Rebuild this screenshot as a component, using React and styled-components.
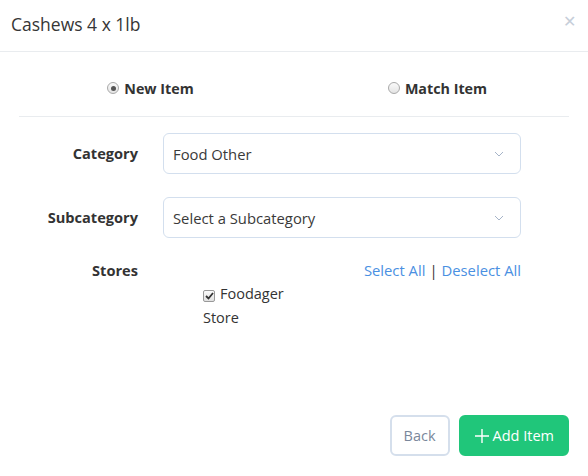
import React from "react";
import styled, { createGlobalStyle } from "styled-components";

const Global = createGlobalStyle`
  html, body { margin: 0; padding: 0; background: #fff; }
  body { font-family: "Open Sans", Lato, sans-serif; color: #333; }
  * { box-sizing: border-box; }
`;

const Modal = styled.div`
  width: 588px;
  height: 476px;
  display: flex;
  flex-direction: column;
  background: #fff;
`;

const Header = styled.div`
  height: 52px;
  border-bottom: 1px solid #e9ecef;
  display: flex;
  align-items: center;
  justify-content: space-between;
  padding: 0 12px 4px 11px;
`;

const Title = styled.h4`
  margin: 0;
  font-size: 17.5px;
  font-weight: 400;
  color: #363636;
`;

const Close = styled.span`
  font-size: 16px;
  color: #c6ced9;
  line-height: 1;
  margin-top: -6px;
`;

const Body = styled.div`
  flex: 1;
  padding: 0 19px;
  display: flex;
  flex-direction: column;
`;

const RadioRow = styled.div`
  display: grid;
  grid-template-columns: 1fr 1fr;
  height: 65px;
  border-bottom: 1px solid #e9ecef;
  align-items: center;
  padding-top: 8px;
`;

const RadioOption = styled.label`
  display: flex;
  align-items: center;
  justify-content: center;
  gap: 5px;
  font-size: 14.3px;
  font-weight: 700;
  color: #333;
  margin-left: ${p => p.$shift || 0}px;
`;

const RadioDot = styled.span`
  width: 12px;
  height: 12px;
  border-radius: 50%;
  border: 1px solid #a9a9a9;
  background: linear-gradient(#fafafa, #e4e4e4);
  display: flex;
  align-items: center;
  justify-content: center;
  &::after {
    content: "";
    width: 5px;
    height: 5px;
    border-radius: 50%;
    background: ${p => (p.$checked ? "#555" : "transparent")};
  }
`;

const Form = styled.div`
  display: flex;
  flex-direction: column;
  padding-top: 16px;
  width: 502px;
`;

const FieldRow = styled.div`
  display: grid;
  grid-template-columns: 119px 1fr;
  column-gap: 25px;
  align-items: ${p => p.$top ? "start" : "center"};
  margin-bottom: ${p => p.$mb || 0}px;
`;

const Label = styled.div`
  text-align: right;
  font-size: 14.6px;
  font-weight: 700;
  color: #333;
  margin-top: ${p => p.$mt || 0}px;
`;

const Select = styled.div`
  height: 41px;
  border: 1px solid #d3dfee;
  border-radius: 6px;
  display: flex;
  align-items: center;
  justify-content: space-between;
  padding: 0 16px 0 9px;
  font-size: 14.8px;
  color: #3a3a3a;
`;

const Chevron = () => (
  <svg width="10" height="6" viewBox="0 0 10 6">
    <path d="M1 1 L5 5 L9 1" fill="none" stroke="#a6b4c8" strokeWidth="1" />
  </svg>
);

const StoresField = styled.div`
  display: flex;
  flex-direction: column;
`;

const LinkRow = styled.div`
  display: flex;
  justify-content: flex-end;
  font-size: 14.8px;
  color: #333;
  gap: 4px;
`;

const Link = styled.a`
  color: #4a90e2;
  text-decoration: none;
`;

const StoreItem = styled.label`
  margin-left: 40px;
  margin-top: 2px;
  width: 90px;
  font-size: 14.5px;
  line-height: 24px;
  color: #333;
`;

const Check = styled.span`
  display: inline-flex;
  width: 12px;
  height: 12px;
  border: 1px solid #999;
  border-radius: 2px;
  background: linear-gradient(#fcfcfc, #e0e0e0);
  margin-right: 5px;
  vertical-align: -1px;
  align-items: center;
  justify-content: center;
`;

const Footer = styled.div`
  display: flex;
  justify-content: flex-end;
  gap: 9px;
  padding: 0 19px 20px 0;
`;

const Button = styled.button`
  height: 41px;
  border-radius: 6px;
  font-family: inherit;
  font-size: 14.5px;
  display: flex;
  align-items: center;
  gap: 3px;
  padding: ${p => (p.$primary ? "0 13px 0 13px" : "0 12px")};
  border: 2px solid ${p => (p.$primary ? "#20c67a" : "#d5dfec")};
  background: ${p => (p.$primary ? "#20c67a" : "#fff")};
  color: ${p => (p.$primary ? "#fff" : "#7a879b")};
`;

export default function App() {
  return (
    <Modal>
      <Global />
      <Header>
        <Title>Cashews 4 x 1lb</Title>
        <Close>✕</Close>
      </Header>
      <Body>
        <RadioRow>
          <RadioOption $shift={-12}>
            <RadioDot $checked />
            New Item
          </RadioOption>
          <RadioOption $shift={12}>
            <RadioDot />
            Match Item
          </RadioOption>
        </RadioRow>
        <Form>
          <FieldRow $mb={23}>
            <Label $mt={-2}>Category</Label>
            <Select>
              Food Other
              <Chevron />
            </Select>
          </FieldRow>
          <FieldRow $mb={22}>
            <Label $mt={-2}>Subcategory</Label>
            <Select>
              Select a Subcategory
              <Chevron />
            </Select>
          </FieldRow>
          <FieldRow $top>
            <Label>Stores</Label>
            <StoresField>
              <LinkRow>
                <Link>Select All</Link>|<Link>Deselect All</Link>
              </LinkRow>
              <StoreItem>
                <Check>
                  <svg width="9" height="8" viewBox="0 0 9 8">
                    <path d="M1 4 L3.5 6.5 L8 1" fill="none" stroke="#333" strokeWidth="1.8" />
                  </svg>
                </Check>
                Foodager Store
              </StoreItem>
            </StoresField>
          </FieldRow>
        </Form>
      </Body>
      <Footer>
        <Button>Back</Button>
        <Button $primary>
          <svg width="16" height="16" viewBox="0 0 16 16">
            <path d="M8 1 V15 M1 8 H15" stroke="#fff" strokeWidth="1.4" />
          </svg>
          Add Item
        </Button>
      </Footer>
    </Modal>
  );
}
